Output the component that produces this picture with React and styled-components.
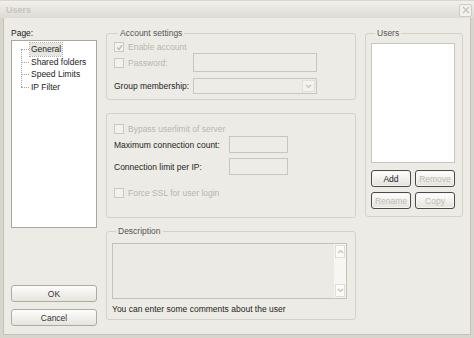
import React from "react";
import styled, { createGlobalStyle } from "styled-components";

const GlobalStyle = createGlobalStyle`
  html, body {
    margin: 0;
    padding: 0;
    background: #edebe6;
  }
  body {
    font-family: "Liberation Sans", Arial, sans-serif;
    font-size: 8.5px;
    color: #222;
  }
`;

const pages = ["General", "Shared folders", "Speed Limits", "IP Filter"];

const Chevron = ({ up }) => (
  <svg width="7" height="5" viewBox="0 0 7 5">
    <path
      d={up ? "M1 4 L3.5 1.5 L6 4" : "M1 1 L3.5 3.5 L6 1"}
      fill="none"
      stroke="#c4c1b9"
      strokeWidth="1.2"
    />
  </svg>
);

const App = () => {
  return (
    <Window>
      <GlobalStyle />
      <TitleBar>
        <Title>Users</Title>
        <CloseBox>
          <svg width="8" height="8" viewBox="0 0 8 8">
            <path d="M1 1 L7 7 M7 1 L1 7" stroke="#c9c6be" strokeWidth="1.5" />
          </svg>
        </CloseBox>
      </TitleBar>

      <Frame>
        <LeftColumn>
          <PageLabel>Page:</PageLabel>
          <TreeBox>
            <TreeList>
              {pages.map((p, i) => (
                <TreeItem key={p}>
                  <TreeText $selected={i === 0}>{p}</TreeText>
                </TreeItem>
              ))}
            </TreeList>
          </TreeBox>
          <DialogButtons>
            <PushButton>OK</PushButton>
            <PushButton>Cancel</PushButton>
          </DialogButtons>
        </LeftColumn>

        <MiddleColumn>
          <Group $h={72} $pad="3px 0 0 7px">
            <Legend>Account settings</Legend>
            <CheckRow $disabled>
              <CheckBox $checked>
                <svg width="7" height="7" viewBox="0 0 7 7">
                  <path d="M1 3.5 L3 5.5 L6 1.2" fill="none" stroke="#bdbab2" strokeWidth="1.4" />
                </svg>
              </CheckBox>
              Enable account
            </CheckRow>
            <FormRow $label={79} $field={124} $h={19}>
              <CheckRow $disabled>
                <CheckBox />
                Password:
              </CheckRow>
              <Field />
            </FormRow>
            <FormRow $label={79} $field={124} $h={16} $mt={6}>
              <Label>Group membership:</Label>
              <Combo>
                <ComboArrow>
                  <Chevron />
                </ComboArrow>
              </Combo>
            </FormRow>
          </Group>

          <Group $h={105} $pad="9px 0 0 7px" $mt={13}>
            <CheckRow $disabled>
              <CheckBox />
              Bypass userlimit of server
            </CheckRow>
            <FormRow $label={115} $field={59} $h={17} $mt={1}>
              <Label>Maximum connection count:</Label>
              <Field />
            </FormRow>
            <FormRow $label={115} $field={59} $h={17} $mt={5}>
              <Label>Connection limit per IP:</Label>
              <Field />
            </FormRow>
            <CheckRow $disabled $mt={12}>
              <CheckBox />
              Force SSL for user login
            </CheckRow>
          </Group>

          <Group $h={94} $pad="0 0 0 5px" $mt={8}>
            <Legend>Description</Legend>
            <Memo>
              <MemoArea />
              <ScrollTrack>
                <ScrollArrow>
                  <Chevron up />
                </ScrollArrow>
                <ScrollArrow>
                  <Chevron />
                </ScrollArrow>
              </ScrollTrack>
            </Memo>
            <Hint>You can enter some comments about the user</Hint>
          </Group>
        </MiddleColumn>

        <RightColumn>
          <Group $h={189} $pad="5px 7px 0 5px">
            <Legend>Users</Legend>
            <UserList />
            <UserButtons>
              <SmallButton>Add</SmallButton>
              <SmallButton $disabled>Remove</SmallButton>
              <SmallButton $disabled>Rename</SmallButton>
              <SmallButton $disabled>Copy</SmallButton>
            </UserButtons>
          </Group>
        </RightColumn>
      </Frame>
    </Window>
  );
};

export default App;

const Window = styled.div`
  width: 474px;
  height: 338px;
  display: flex;
  flex-direction: column;
  background: #edebe6;
  overflow: hidden;
`;

const TitleBar = styled.div`
  height: 18px;
  display: flex;
  align-items: center;
  justify-content: space-between;
  padding: 1px 2px 0 6px;
  box-sizing: border-box;
  background: linear-gradient(#f1f0ec, #dedbd4);
  border-top: 1px solid #d9d6ce;
`;

const Title = styled.span`
  font-size: 9px;
  font-weight: bold;
  color: #c8c5bd;
`;

const CloseBox = styled.div`
  width: 11px;
  height: 11px;
  border: 1px solid #cfccc4;
  border-radius: 2px;
  background: #f3f2ee;
  display: flex;
  align-items: center;
  justify-content: center;
`;

const Frame = styled.div`
  flex: 1;
  display: flex;
  gap: 9px;
  padding: 10px 8px 9px 8px;
  border: 3px solid #d8d5cd;
  border-top: none;
  box-shadow: inset 1px 0 0 #c4c1b9, inset -1px 0 0 #c4c1b9, inset 0 -1px 0 #c4c1b9;
`;

const LeftColumn = styled.div`
  width: 86px;
  display: flex;
  flex-direction: column;
`;

const MiddleColumn = styled.div`
  width: 250px;
  display: flex;
  flex-direction: column;
`;

const RightColumn = styled.div`
  width: 98px;
  display: flex;
  flex-direction: column;
`;

const PageLabel = styled.div`
  height: 10px;
  line-height: 10px;
  margin-bottom: 2px;
  color: #222;
`;

const TreeBox = styled.div`
  height: 188px;
  box-sizing: border-box;
  border: 1px solid #aaa79f;
  background: #fff;
`;

const TreeList = styled.ul`
  position: relative;
  list-style: none;
  margin: 0;
  padding: 2px 0 0 18px;

  &::before {
    content: "";
    position: absolute;
    left: 9px;
    top: 8px;
    height: 38px;
    border-left: 1px dotted #a5a5a5;
  }
`;

const TreeItem = styled.li`
  position: relative;
  height: 12.7px;
  line-height: 12.7px;

  &::before {
    content: "";
    position: absolute;
    left: -9px;
    top: 6px;
    width: 8px;
    border-top: 1px dotted #a5a5a5;
  }
`;

const TreeText = styled.span`
  display: inline-block;
  padding: 0 1px;
  color: #222;
  background: ${(p) => (p.$selected ? "#e7e5df" : "transparent")};
  outline: ${(p) => (p.$selected ? "1px dotted #b0ada5" : "none")};
`;

const DialogButtons = styled.div`
  margin-top: auto;
  display: flex;
  flex-direction: column;
  gap: 7px;
`;

const PushButton = styled.button`
  height: 17px;
  padding: 0;
  border: 1px solid #aeaba3;
  border-radius: 3px;
  background: linear-gradient(#fdfdfc, #e6e4de);
  font-family: inherit;
  font-size: 8.5px;
  color: #333;
`;

const Group = styled.fieldset`
  margin: ${(p) => p.$mt || 0}px 0 0 0;
  padding: ${(p) => p.$pad};
  height: ${(p) => p.$h}px;
  box-sizing: border-box;
  min-width: 0;
  border: 1px solid #d5d2ca;
  border-radius: 3px;
`;

const Legend = styled.legend`
  margin-left: 4px;
  padding: 0 2px;
  line-height: 10px;
  font-size: 8.5px;
  color: #555;
`;

const CheckRow = styled.div`
  display: flex;
  align-items: center;
  gap: 4px;
  height: 12px;
  margin-top: ${(p) => p.$mt || 0}px;
  color: ${(p) => (p.$disabled ? "#bab6ae" : "#222")};
`;

const CheckBox = styled.span`
  width: 8px;
  height: 8px;
  border: 1px solid #cdcac2;
  background: #f3f2ee;
  display: flex;
  align-items: center;
  justify-content: center;
`;

const FormRow = styled.div`
  display: grid;
  grid-template-columns: ${(p) => p.$label}px ${(p) => p.$field}px;
  align-items: stretch;
  height: ${(p) => p.$h}px;
  margin-top: ${(p) => p.$mt || 0}px;

  & > *:first-child {
    align-self: center;
  }
`;

const Label = styled.span`
  color: #1e1e1e;
`;

const Field = styled.div`
  box-sizing: border-box;
  border: 1px solid #c9c6be;
  background: #eeece7;
`;

const Combo = styled(Field)`
  display: flex;
  justify-content: flex-end;
  padding: 1px;
`;

const ComboArrow = styled.div`
  width: 11px;
  border: 1px solid #e2dfd8;
  background: #f4f3ef;
  display: flex;
  align-items: center;
  justify-content: center;
`;

const Memo = styled.div`
  margin-top: 7px;
  width: 235px;
  height: 56px;
  box-sizing: border-box;
  border: 1px solid #c4c1b9;
  background: #eceae4;
  display: flex;
`;

const MemoArea = styled.div`
  flex: 1;
`;

const ScrollTrack = styled.div`
  width: 12px;
  background: #f7f6f3;
  display: flex;
  flex-direction: column;
  justify-content: space-between;
  padding: 1px;
  box-sizing: border-box;
`;

const ScrollArrow = styled.div`
  height: 11px;
  border: 1px solid #e0ddd6;
  background: #fbfbf9;
  display: flex;
  align-items: center;
  justify-content: center;
`;

const Hint = styled.div`
  margin-top: 4px;
  line-height: 12px;
  color: #1e1e1e;
`;

const UserList = styled.div`
  width: 84px;
  height: 120px;
  box-sizing: border-box;
  border: 1px solid #c9c6be;
  background: #fff;
`;

const UserButtons = styled.div`
  margin-top: 7px;
  display: grid;
  grid-template-columns: 40px 40px;
  column-gap: 4px;
  row-gap: 5px;
`;

const SmallButton = styled.button`
  height: 17px;
  padding: 0;
  border: 1px solid #4a4a48;
  border-radius: 3px;
  background: linear-gradient(#ffffff, #e4e2dc);
  box-shadow: inset 0 0 0 1px #f6f5f2;
  font-family: inherit;
  font-size: 8.5px;
  color: ${(p) => (p.$disabled ? "#bdb9b1" : "#222")};
`;
